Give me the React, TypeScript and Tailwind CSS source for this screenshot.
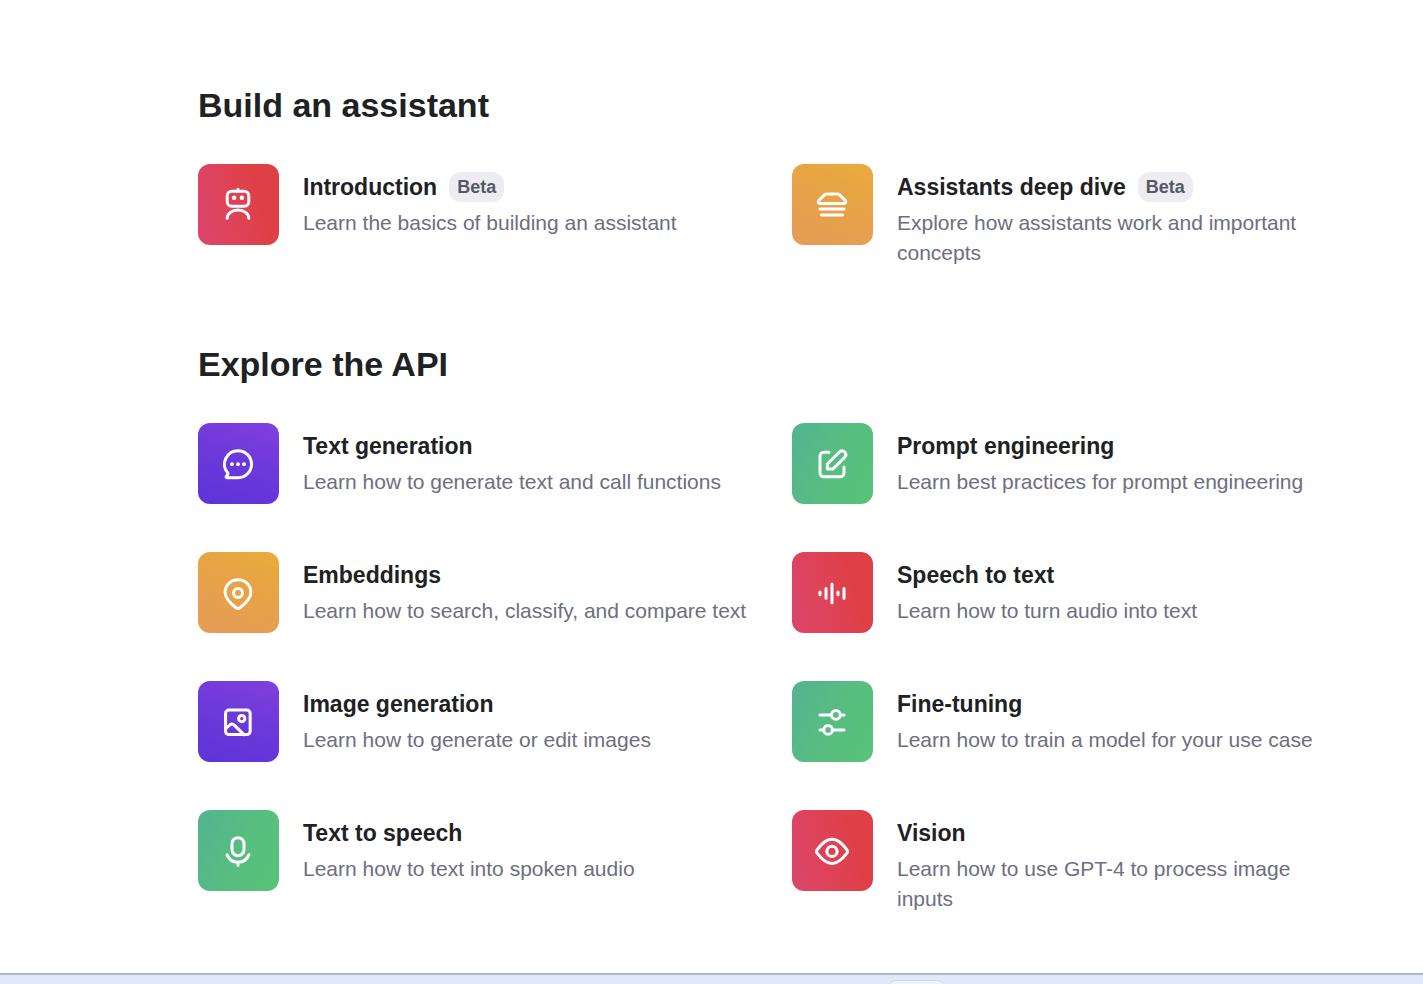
import type { ReactNode } from "react";
import clsx from "clsx";

type Tone = "red" | "orange" | "purple" | "green";

type Guide = {
  title: string;
  description: string;
  href: string;
  tone: Tone;
  icon: ReactNode;
  beta?: boolean;
};

const tones: Record<Tone, string> = {
  red: "bg-[linear-gradient(75deg,#dc466d_0%,#df4048_70%,#df4048_100%)]",
  orange: "bg-[linear-gradient(25deg,#e59c58_0%,#e7a346_60%,#e9ac3a_100%)]",
  purple: "bg-[linear-gradient(20deg,#5c33d9_0%,#6e39da_55%,#8040dc_100%)]",
  green: "bg-[linear-gradient(115deg,#53b391_0%,#57be80_55%,#57c478_100%)]",
};

const assistantGuides: Guide[] = [
  {
    title: "Introduction",
    description: "Learn the basics of building an assistant",
    href: "#introduction",
    tone: "red",
    beta: true,
    icon: (
      <>
        <rect x="4.8" y="2.9" width="14.4" height="10" rx="3" />
        <path d="M12 2.9V1.500M4.800 20.900c0-3.100 3.200-5.600 7.200-5.600s7.200 2.500 7.200 5.600" />
        <circle cx="9.4" cy="7.2" r="1.5" fill="currentColor" stroke="none" />
        <circle cx="14.6" cy="7.2" r="1.5" fill="currentColor" stroke="none" />
      </>
    ),
  },
  {
    title: "Assistants deep dive",
    description: "Explore how assistants work and important concepts",
    href: "#deep-dive",
    tone: "orange",
    beta: true,
    icon: (
      <path d="M8.300 4.600h7.400c.5 0 1 .2 1.300.6l3.700 3.600c.9.900.5 2.200-.7 2.200H4c-1.200 0-1.600-1.300-.7-2.200L7 5.200c.3-.4.800-.6 1.300-.6ZM4 14.700h16M5 18.700h14" />
    ),
  },
];

const apiGuides: Guide[] = [
  {
    title: "Text generation",
    description: "Learn how to generate text and call functions",
    href: "#text-generation",
    tone: "purple",
    icon: (
      <>
        <path d="M12 3.100a9 9 0 1 1 0 18H4.500c-.5 0-.6-.5-.3-.9l1-1.300c.2-.3.200-.6 0-.9A9 9 0 0 1 12 3.100Z" />
        <circle cx="8" cy="12.100" r="1.300" fill="currentColor" stroke="none" />
        <circle cx="12" cy="12.100" r="1.300" fill="currentColor" stroke="none" />
        <circle cx="16" cy="12.100" r="1.300" fill="currentColor" stroke="none" />
      </>
    ),
  },
  {
    title: "Prompt engineering",
    description: "Learn best practices for prompt engineering",
    href: "#prompt-engineering",
    tone: "green",
    icon: (
      <>
        <path d="M10 4.200H6.500a2.500 2.500 0 0 0-2.500 2.500V18a2.500 2.500 0 0 0 2.500 2.500h11A2.500 2.500 0 0 0 20 18v-4" />
        <path d="m8.900 12 8.300-8.200a2.500 2.500 0 0 1 3.500 3.500L12.500 15.400H8.900Z" />
      </>
    ),
  },
  {
    title: "Embeddings",
    description: "Learn how to search, classify, and compare text",
    href: "#embeddings",
    tone: "orange",
    icon: (
      <>
        <path d="M20.600 11.500c0 3.800-2.900 7-7.300 10.300a2.100 2.100 0 0 1-2.600 0C6.300 18.500 3.400 15.300 3.400 11.500a8.600 8.400 0 0 1 17.200 0Z" />
        <circle cx="12" cy="12" r="3" />
      </>
    ),
  },
  {
    title: "Speech to text",
    description: "Learn how to turn audio into text",
    href: "#speech-to-text",
    tone: "red",
    icon: <path d="M4 11.300v1.900M8 9v6.500M12 6v12.500M16 11.300v1.900M20 9v6.500" />,
  },
  {
    title: "Image generation",
    description: "Learn how to generate or edit images",
    href: "#image-generation",
    tone: "purple",
    icon: (
      <>
        <rect x="3.7" y="4" width="16.4" height="16.4" rx="2.300" />
        <path d="m3.700 16.500 2.800-2.500a2.200 2.200 0 0 1 3 .1l6.500 6.300" />
        <circle cx="14.500" cy="9.700" r="2.100" />
      </>
    ),
  },
  {
    title: "Fine-tuning",
    description: "Learn how to train a model for your use case",
    href: "#fine-tuning",
    tone: "green",
    icon: (
      <>
        <path d="M4 7.300h7.700M17.500 7.300H20M4 17.300h2.400M12.300 17.300H20" />
        <circle cx="14.600" cy="7.300" r="2.900" />
        <circle cx="9.400" cy="17.300" r="2.900" />
      </>
    ),
  },
  {
    title: "Text to speech",
    description: "Learn how to text into spoken audio",
    href: "#text-to-speech",
    tone: "green",
    icon: (
      <>
        <rect x="8" y="3.100" width="8" height="12" rx="4" />
        <path d="M4.700 14.600C6 17.700 8.800 19.500 12 19.500s6-1.800 7.300-4.900M12 19.500v2" />
      </>
    ),
  },
  {
    title: "Vision",
    description: "Learn how to use GPT-4 to process image inputs",
    href: "#vision",
    tone: "red",
    icon: (
      <>
        <path d="M21.800 11c.7.800.7 1.800 0 2.600C19.700 16.400 16.700 20.300 12 20.300s-7.700-3.900-9.800-6.700c-.7-.8-.7-1.800 0-2.600C4.300 8.200 7.300 4.200 12 4.200s7.700 4 9.800 6.800Z" />
        <circle cx="12" cy="12.300" r="3.400" />
      </>
    ),
  },
];

export default function App() {
  return (
    <div className="bg-white font-['Liberation_Sans',Arial,sans-serif]">
      <main className="flex flex-col gap-[73px] pt-[82px] pr-[79px] pb-[59px] pl-[198px]">
        <GuideSection heading="Build an assistant" guides={assistantGuides} />
        <GuideSection heading="Explore the API" guides={apiGuides} />
      </main>
      <footer className="h-[11px] overflow-hidden border-t-2 border-[#b4b8c4] bg-[#e1e8fa]">
        <div className="mt-[5px] ml-[888px] h-6 w-[57px] rounded-lg border border-[#d3daec] bg-[#eef2fc]" />
      </footer>
    </div>
  );
}

function GuideSection({ heading, guides }: { heading: string; guides: Guide[] }) {
  return (
    <section>
      <h2 className="text-[34px] leading-[46px] font-bold text-[#202123]">
        {heading}
      </h2>
      <div className="mt-9 grid grid-cols-2 gap-x-[42px] gap-y-12">
        {guides.map((guide) => (
          <GuideLink key={guide.title} guide={guide} />
        ))}
      </div>
    </section>
  );
}

function GuideLink({ guide }: { guide: Guide }) {
  return (
    <a href={guide.href} className="flex items-start gap-6">
      <span
        className={clsx(
          "flex size-[81px] flex-none items-center rounded-xl pl-[22px] text-white",
          tones[guide.tone],
        )}
      >
        <svg
          viewBox="0 0 24 24"
          className="size-9"
          fill="none"
          stroke="currentColor"
          strokeWidth="2"
          strokeLinecap="round"
          strokeLinejoin="round"
          aria-hidden
        >
          {guide.icon}
        </svg>
      </span>
      <span className="min-w-0 flex-1 pt-2">
        <span className="flex items-center gap-3 text-[23px] leading-[30px] font-bold text-[#202123]">
          {guide.title}
          {guide.beta && (
            <span className="rounded-xl bg-[#ececf1] px-2 text-lg leading-[30px] text-[#565869]">
              Beta
            </span>
          )}
        </span>
        <span className="mt-[6px] block text-[21px] leading-[30px] text-[#6e6e80]">
          {guide.description}
        </span>
      </span>
    </a>
  );
}
